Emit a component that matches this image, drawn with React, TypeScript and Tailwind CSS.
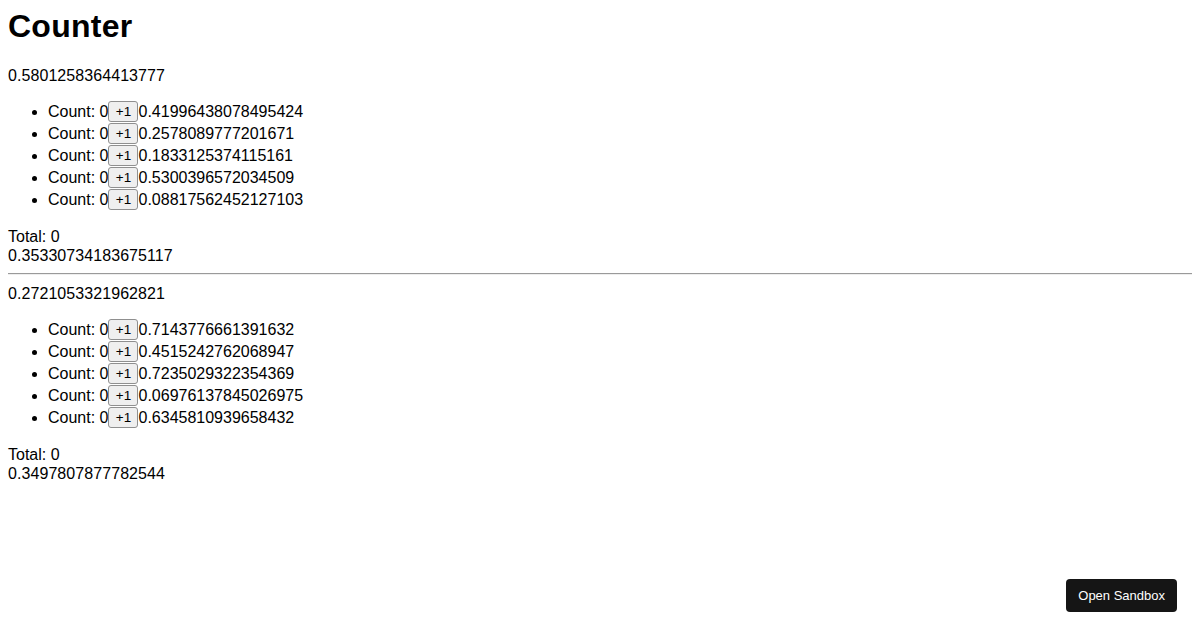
import { Fragment } from 'react';

const sections = [
  {
    top: '0.5801258364413777',
    rows: ['0.41996438078495424', '0.2578089777201671', '0.1833125374115161', '0.5300396572034509', '0.08817562452127103'],
    bottom: '0.35330734183675117',
  },
  {
    top: '0.2721053321962821',
    rows: ['0.7143776661391632', '0.4515242762068947', '0.7235029322354369', '0.06976137845026975', '0.6345810939658432'],
    bottom: '0.3497807877782544',
  },
];

function Counter({ value }: { value: string }) {
  return (
    <li className="list-item">
      <div className="flex items-center h-[22px]">
        <span>Count: 0</span>
        <button className="w-[30px] h-[21px] bg-[#efefef] border border-[#8f8f8f] rounded-[3px] text-[13.5px] leading-[normal] text-black flex items-center justify-center">
          +1
        </button>
        <span>{value}</span>
      </div>
    </li>
  );
}

export default function App() {
  return (
    <div className="min-h-[630px] bg-white p-2 text-black text-[16px] leading-[19px] font-['Liberation_Sans',Arial,sans-serif]">
      <h1 className="text-[32px] font-bold leading-[37px] tracking-[0.25px] mb-[21.44px]">Counter</h1>
      {sections.map((s, i) => (
        <Fragment key={i}>
          {i > 0 && <hr className="h-0 mt-2 mb-[9px] border-t border-b border-t-[#9a9a9a] border-b-[#eeeeee]" />}
          <div className="tracking-[0.07px]">{s.top}</div>
          <ul className="list-disc pl-10 mt-[15px] mb-[17px]">
            {s.rows.map(r => (
              <Counter key={r} value={r} />
            ))}
          </ul>
          <div>Total: 0</div>
          <div className="tracking-[0.07px]">{s.bottom}</div>
        </Fragment>
      ))}
      <button className="fixed right-[23px] bottom-[18px] h-[33px] px-3 rounded-[4px] bg-[#151515] text-white text-[13px] leading-[normal]">
        Open Sandbox
      </button>
    </div>
  );
}
